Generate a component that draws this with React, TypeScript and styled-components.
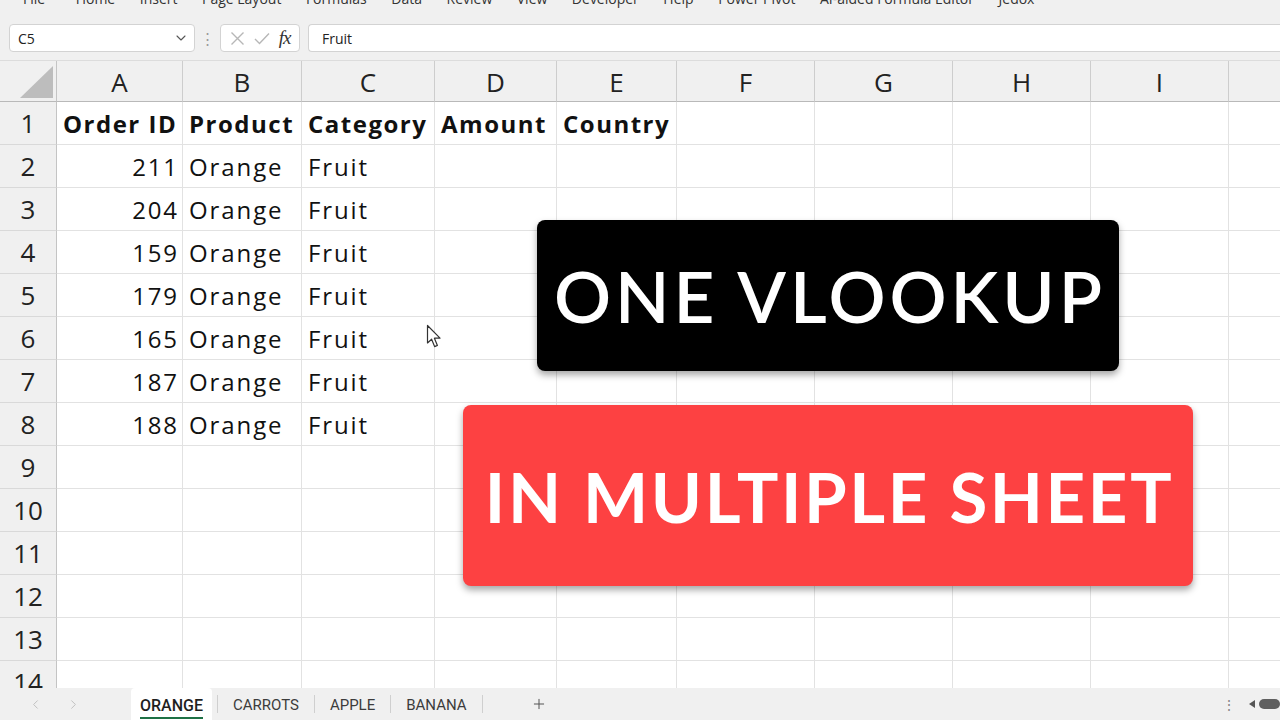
import React from 'react'
import styled, { createGlobalStyle } from 'styled-components'
import { ChevronDown, ChevronLeft, ChevronRight, Plus } from 'lucide-react'

const GlobalStyle = createGlobalStyle`
  * { box-sizing: border-box; }
  html, body { margin: 0; padding: 0; background: #f0f0f0; }
  body { font-family: 'Open Sans', 'Noto Sans', sans-serif; }
`

const Page = styled.div`
  position: relative;
  width: 1280px;
  height: 720px;
  overflow: hidden;
  background: #f0f0f0;
  display: flex;
  flex-direction: column;
`

const Ribbon = styled.div`
  height: 23px;
  flex-shrink: 0;
  overflow: hidden;
`

const RibbonRow = styled.div`
  display: flex;
  gap: 24.5px;
  padding-left: 23px;
  margin-top: -9px;
  font-size: 14px;
  line-height: 16px;
  color: #333;
  white-space: nowrap;
`

const RibbonTab = styled.span<{ $wide?: boolean }>`
  margin-right: ${p => (p.$wide ? '6px' : '0')};
`

const FormulaBar = styled.div`
  height: 30px;
  flex-shrink: 0;
  display: flex;
  align-items: center;
  padding: 0 0 0 9px;
`

const NameBox = styled.div`
  width: 186px;
  height: 28px;
  background: #fff;
  border: 1px solid #d3d3d3;
  border-radius: 4px;
  display: flex;
  align-items: center;
  justify-content: space-between;
  padding: 0 5px 0 8px;
  font-size: 14px;
  color: #222;
`

const Grip = styled.div`
  width: 25px;
  text-align: center;
  color: #9a9a9a;
  font-size: 15px;
  line-height: 1;
`

const IconBox = styled.div`
  width: 80px;
  height: 28px;
  background: #fff;
  border: 1px solid #d3d3d3;
  border-radius: 4px;
  display: flex;
  align-items: center;
  justify-content: space-around;
  padding: 0 4px;
`

const FxMark = styled.span`
  font-family: 'Liberation Serif', 'DejaVu Serif', serif;
  font-style: italic;
  font-size: 19px;
  color: #333;
  letter-spacing: -1px;
`

const FormulaInput = styled.div`
  flex: 1;
  height: 28px;
  margin-left: 8px;
  background: #fff;
  border: 1px solid #d3d3d3;
  border-right: none;
  border-radius: 4px 0 0 4px;
  display: flex;
  align-items: center;
  padding-left: 13px;
  font-size: 14px;
  color: #222;
`

const SheetArea = styled.div`
  margin-top: 7px;
  height: 628px;
  flex-shrink: 0;
  overflow: hidden;
  background: #fff;
  border-top: 1px solid #dcdcdc;
`

const Grid = styled.div`
  display: grid;
  grid-template-columns: 57px 126px 119px 133px 122px 120px 138px 138px 138px 138px 160px;
  grid-template-rows: 41px;
  grid-auto-rows: 43px;
`

const Corner = styled.div`
  background: #f0f0f0;
  border-right: 1px solid #c4c4c4;
  border-bottom: 1px solid #b9b9b9;
  display: flex;
  align-items: flex-end;
  justify-content: flex-end;
  padding: 0 3px 3px 0;
`

const HeaderText = styled.div`
  background: #f0f0f0;
  display: flex;
  align-items: center;
  justify-content: center;
  font-family: 'Open Sans', 'Noto Sans', sans-serif;
  font-size: 26px;
  color: #222;
`

const ColHeader = styled(HeaderText)`
  border-right: 1px solid #cdcdcd;
  border-bottom: 1px solid #b9b9b9;
  padding-top: 2px;
`

const RowHeader = styled(HeaderText)`
  border-right: 1px solid #c4c4c4;
  border-bottom: 1px solid #d9d9d9;
`

const Cell = styled.div<{ $right?: boolean; $bold?: boolean }>`
  border-right: 1px solid #e2e2e2;
  border-bottom: 1px solid #e2e2e2;
  display: flex;
  align-items: center;
  justify-content: ${p => (p.$right ? 'flex-end' : 'flex-start')};
  padding: 0 3px 0 6px;
  font-family: 'Open Sans', 'Noto Sans', sans-serif;
  font-size: 24px;
  letter-spacing: ${p => (p.$bold ? '1.5px' : '1.9px')};
  font-weight: ${p => (p.$bold ? 700 : 400)};
  color: #111;
  white-space: nowrap;
`

const TabBar = styled.div`
  height: 32px;
  flex-shrink: 0;
  display: flex;
  align-items: stretch;
  background: #f0f0f0;
`

const NavArrows = styled.div`
  width: 131px;
  display: flex;
  align-items: center;
  gap: 23px;
  padding-left: 28px;
  color: #bdbdbd;
`

const Tab = styled.div<{ $active?: boolean }>`
  display: flex;
  align-items: center;
  padding: ${p => (p.$active ? '0 9px' : '0 15px')};
  margin-right: ${p => (p.$active ? '5px' : '0')};
  background: ${p => (p.$active ? '#fff' : 'transparent')};
  border-radius: ${p => (p.$active ? '4px 4px 0 0' : '0')};
  font-family: 'Roboto', 'Noto Sans', sans-serif;
  font-size: ${p => (p.$active ? '16px' : '15px')};
  font-weight: ${p => (p.$active ? 500 : 400)};
  color: ${p => (p.$active ? '#1f1f1f' : '#3c3c3c')};
`

const TabLabel = styled.span<{ $active?: boolean }>`
  padding: 4px 0 2px;
  border-bottom: 2px solid ${p => (p.$active ? '#1e7145' : 'transparent')};
  margin-top: 2px;
`

const TabDivider = styled.div`
  width: 1px;
  height: 18px;
  align-self: center;
  background: #cfcfcf;
`

const AddSheet = styled.div`
  display: flex;
  align-items: center;
  margin-left: 48px;
  color: #555;
`

const ScrollGroup = styled.div`
  margin-left: auto;
  display: flex;
  align-items: center;
  width: 58px;
`

const ScrollGrip = styled.div`
  width: 10px;
  text-align: center;
  color: #888;
  font-size: 14px;
  margin-right: 17px;
`

const ScrollArrow = styled.div`
  width: 0;
  height: 0;
  border-top: 4px solid transparent;
  border-bottom: 4px solid transparent;
  border-right: 6px solid #555;
  margin-right: 4px;
`

const ScrollThumb = styled.div`
  width: 40px;
  height: 10px;
  border-radius: 5px;
  background: #5f5f5f;
`

const Banner = styled.div`
  position: absolute;
  display: flex;
  align-items: center;
  justify-content: center;
  border-radius: 8px;
  color: #fff;
  font-family: 'Lato', 'Noto Sans', sans-serif;
  white-space: nowrap;
  box-shadow: 0 4px 7px rgba(0, 0, 0, 0.35);
`

const BlackBanner = styled(Banner)`
  left: 537px;
  top: 220px;
  width: 582px;
  height: 151px;
  background: #000;
  font-size: 71px;
  font-weight: 600;
  letter-spacing: 3.9px;
  padding-left: 4px;
`

const RedBanner = styled(Banner)`
  left: 463px;
  top: 405px;
  width: 730px;
  height: 181px;
  background: #fd4142;
  font-size: 69px;
  font-weight: 700;
  letter-spacing: 2.6px;
  padding-left: 3px;
  padding-top: 2px;
`

const Pointer = styled.svg`
  position: absolute;
  left: 426px;
  top: 324px;
`

const ribbonTabs = [
  'File',
  'Home',
  'Insert',
  'Page Layout',
  'Formulas',
  'Data',
  'Review',
  'View',
  'Developer',
  'Help',
  'Power Pivot',
  'AI-aided Formula Editor',
  'Jedox',
]

const columns = ['A', 'B', 'C', 'D', 'E', 'F', 'G', 'H', 'I', '']

const headerRow = ['Order ID', 'Product', 'Category', 'Amount', 'Country']
const orders = [211, 204, 159, 179, 165, 187, 188]

const sheets = ['ORANGE', 'CARROTS', 'APPLE', 'BANANA']

const SelectAll = () => (
  <svg width="33" height="32" viewBox="0 0 33 32">
    <polygon points="0,32 33,32 33,0" fill="#bdbdbd" />
  </svg>
)

const CrossIcon = () => (
  <svg width="15" height="15" viewBox="0 0 15 15">
    <path d="M1.5 1.5 L13.5 13.5 M13.5 1.5 L1.5 13.5" stroke="#b7b7b7" strokeWidth="1.4" fill="none" />
  </svg>
)

const CheckIcon = () => (
  <svg width="16" height="13" viewBox="0 0 16 13">
    <path d="M1 7 L5.5 11.5 L15 1.5" stroke="#b7b7b7" strokeWidth="1.4" fill="none" />
  </svg>
)

export default function App() {
  const rows: { label: number; cells: { text: string; right?: boolean; bold?: boolean }[] }[] = []
  rows.push({ label: 1, cells: headerRow.map(text => ({ text, bold: true })) })
  orders.forEach((id, i) => {
    rows.push({
      label: i + 2,
      cells: [{ text: String(id), right: true }, { text: 'Orange' }, { text: 'Fruit' }],
    })
  })
  for (let r = 9; r <= 14; r++) rows.push({ label: r, cells: [] })

  return (
    <>
      <GlobalStyle />
      <Page>
        <Ribbon>
          <RibbonRow>
            {ribbonTabs.map((t, i) => (
              <RibbonTab key={t} $wide={i === 0}>
                {t}
              </RibbonTab>
            ))}
          </RibbonRow>
        </Ribbon>

        <FormulaBar>
          <NameBox>
            <span>C5</span>
            <ChevronDown size={16} color="#555" strokeWidth={1.6} />
          </NameBox>
          <Grip>⋮</Grip>
          <IconBox>
            <CrossIcon />
            <CheckIcon />
            <FxMark>fx</FxMark>
          </IconBox>
          <FormulaInput>Fruit</FormulaInput>
        </FormulaBar>

        <SheetArea>
          <Grid>
            <Corner>
              <SelectAll />
            </Corner>
            {columns.map((c, i) => (
              <ColHeader key={i}>{c}</ColHeader>
            ))}
            {rows.map(row => (
              <React.Fragment key={row.label}>
                <RowHeader>{row.label}</RowHeader>
                {columns.map((_, ci) => {
                  const cell = row.cells[ci]
                  return (
                    <Cell key={ci} $right={cell?.right} $bold={cell?.bold}>
                      {cell?.text}
                    </Cell>
                  )
                })}
              </React.Fragment>
            ))}
          </Grid>
        </SheetArea>

        <TabBar>
          <NavArrows>
            <ChevronLeft size={15} strokeWidth={1.5} />
            <ChevronRight size={15} strokeWidth={1.5} />
          </NavArrows>
          {sheets.map((s, i) => (
            <React.Fragment key={s}>
              <Tab $active={i === 0}>
                <TabLabel $active={i === 0}>{s}</TabLabel>
              </Tab>
              <TabDivider />
            </React.Fragment>
          ))}
          <AddSheet>
            <Plus size={16} strokeWidth={1.5} />
          </AddSheet>
          <ScrollGroup>
            <ScrollGrip>⋮</ScrollGrip>
            <ScrollArrow />
            <ScrollThumb />
          </ScrollGroup>
        </TabBar>

        <BlackBanner>ONE VLOOKUP</BlackBanner>
        <RedBanner>IN MULTIPLE SHEET</RedBanner>

        <Pointer width="16" height="25" viewBox="0 0 16 25">
          <path
            d="M1.5 1.5 L1.5 19 L5.6 15.2 L8.6 22.6 L11.4 21.4 L8.4 14.2 L14 14.2 Z"
            fill="#fff"
            stroke="#333"
            strokeWidth="1.2"
            strokeLinejoin="round"
          />
        </Pointer>
      </Page>
    </>
  )
}
